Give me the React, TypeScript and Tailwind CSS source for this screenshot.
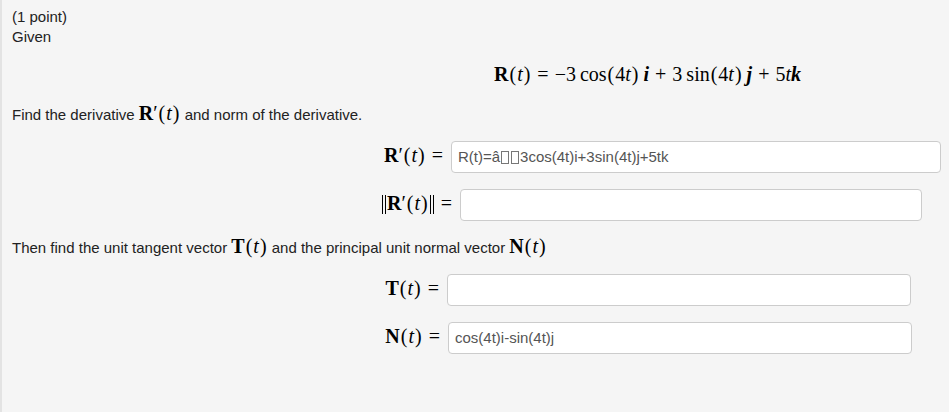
import React from "react";

function M({ children }: { children: React.ReactNode }) {
    return (
        <span className="font-['Liberation_Serif',serif] text-[20px] leading-5 text-black whitespace-nowrap">{children}</span>
    );
}

function Op({ c }: { c: string }) {
    return <span className="mx-[6px]">{c}</span>;
}

// parens in math get a bit of air like MathJax
function P({ children }: { children: React.ReactNode }) {
    return (
        <>
            <span className="mx-[1px]">(</span>
            {children}
            <span className="mx-[1px]">)</span>
        </>
    );
}

function Norm() {
    return <span className="inline-block w-[4px] h-[19px] border-x border-black align-[-4px] mx-[1px]"></span>;
}

function Bad() {
    return <span className="inline-block w-[8px] h-[13px] border border-[#777] align-[-1px] mx-[1px]"></span>;
}

function Row({ label, labelW, inputW, children }: { label: React.ReactNode; labelW: string; inputW: string; children?: React.ReactNode }) {
    return (
        <div className="flex items-center h-8">
            <div className={`${labelW} text-right pr-2 shrink-0`}>
                <M>
                    {label}
                    <span className="ml-[6px]">=</span>
                </M>
            </div>
            <div className={`${inputW} h-8 bg-white border border-[#cccccc] rounded-[4px] flex items-center px-[6px] text-[15px] text-[#555555] font-['Liberation_Sans',Arial,sans-serif] whitespace-nowrap`}>
                {children}
            </div>
        </div>
    );
}

export default function App() {
    return (
        <div className="w-[949px] h-[412px] bg-[#f5f5f5] border-l-2 border-[#e3e3e3] text-[#222222] font-['Liberation_Sans',Arial,sans-serif] text-[15px] overflow-hidden">
            <div className="pl-[10px] pt-[7px]">
                <p className="leading-5">(1 point)</p>
                <p className="leading-5">Given</p>
            </div>

            <div className="mt-[7px] h-10 flex items-center pl-[492px]">
                <M>
                    <b>R</b><P><i>t</i></P><Op c="=" />−3<span className="ml-[4px]">cos</span><P>4<i>t</i></P><span className="ml-[4px]"><b><i>i</i></b></span>
                    <Op c="+" />3<span className="ml-[4px]">sin</span><P>4<i>t</i></P><span className="ml-[4px]"><b><i>j</i></b></span>
                    <Op c="+" />5<i>t</i><b><i>k</i></b>
                </M>
            </div>

            <p className="mt-[9px] pl-[10px] h-[22px] leading-[22px]">
                Find the derivative <M><b>R</b>′<P><i>t</i></P></M> and norm of the derivative.
            </p>

            <div className="mt-[16px]">
                <Row label={<><b>R</b>′<P><i>t</i></P></>} labelW="w-[449px]" inputW="w-[490px]">
                    R(t)=â<Bad /><Bad />3cos(4t)i+3sin(4t)j+5tk
                </Row>
            </div>
            <div className="mt-[16px]">
                <Row label={<><Norm /><b>R</b>′<P><i>t</i></P><Norm /></>} labelW="w-[458px]" inputW="w-[462px]" />
            </div>

            <p className="mt-[15px] pl-[10px] h-[22px] leading-[22px]">
                Then find the unit tangent vector <M><b>T</b><P><i>t</i></P></M> and the principal unit normal vector <M><b>N</b><P><i>t</i></P></M>
            </p>

            <div className="mt-[16px]">
                <Row label={<><b>T</b><P><i>t</i></P></>} labelW="w-[445px]" inputW="w-[464px]" />
            </div>
            <div className="mt-[16px]">
                <Row label={<><b>N</b><P><i>t</i></P></>} labelW="w-[446px]" inputW="w-[464px]">
                    cos(4t)i-sin(4t)j
                </Row>
            </div>
        </div>
    );
}
